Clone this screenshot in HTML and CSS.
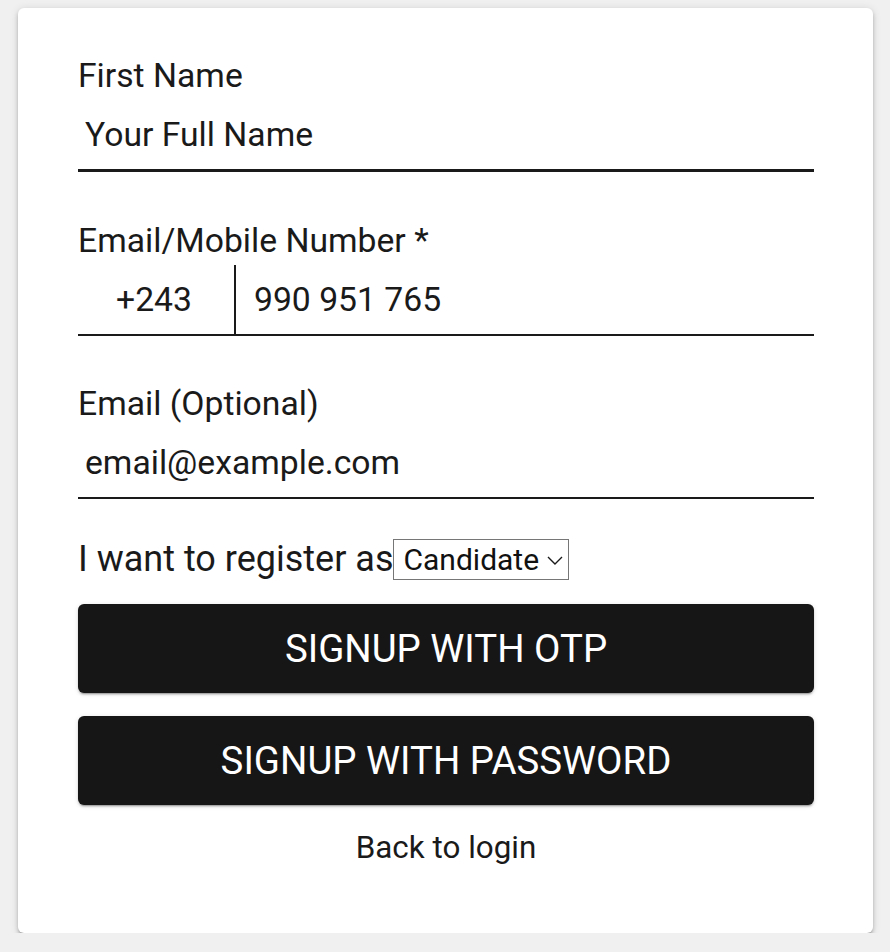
FILE: index.html
```html
<!DOCTYPE html>
<html lang="en">
<head>
<meta charset="utf-8">
<title>Sign up</title>
<link rel="stylesheet" href="styles.css">
</head>
<body>
<main class="card">
  <form class="form">
    <div class="field">
      <label class="label" for="name">First Name</label>
      <input class="input input-first" id="name" type="text" placeholder="Your Full Name">
    </div>
    <div class="field field-mid">
      <label class="label" for="phone">Email/Mobile Number *</label>
      <div class="phone-row">
        <span class="code">+243</span>
        <input class="input input-phone" id="phone" type="text" value="990 951 765">
      </div>
    </div>
    <div class="field">
      <label class="label" for="email">Email (Optional)</label>
      <input class="input" id="email" type="text" placeholder="email@example.com">
    </div>
    <div class="register-row">
      <span class="register-text">I want to register as</span>
      <span class="select-wrap">
        <select class="select">
          <option>Candidate</option>
          <option>Employer</option>
        </select>
        <svg class="chevron" viewBox="0 0 16 9" width="16" height="9" aria-hidden="true"><path d="M1 1 L8 8 L15 1" fill="none" stroke="#1a1a1a" stroke-width="1.4"/></svg>
      </span>
    </div>
    <button class="btn btn-otp" type="button">SIGNUP WITH OTP</button>
    <button class="btn btn-pass" type="button">SIGNUP WITH PASSWORD</button>
    <a class="back" href="#">Back to login</a>
  </form>
</main>
</body>
</html>
```

FILE: styles.css
```css
* { box-sizing: border-box; }

html, body {
  margin: 0;
  padding: 0;
  background: #f0f0f0;
}

body {
  padding: 8px 17px 0 18px;
  font-family: Roboto, "Liberation Sans", Arial, sans-serif;
  color: #1a1a1a;
}

.card {
  width: 855px;
  height: 925px;
  background: #ffffff;
  border-radius: 6px;
  box-shadow: 0 3px 3px -2px rgba(0,0,0,0.28), 0 3px 4px 0 rgba(0,0,0,0.18), 0 1px 8px 0 rgba(0,0,0,0.12);
  padding: 44px 59px 0 60px;
}

.form {
  display: flex;
  flex-direction: column;
}

.field {
  display: flex;
  flex-direction: column;
  margin-bottom: 44px;
}

.field-mid {
  margin-top: 1px;
}

.label {
  font-size: 33.7px;
  line-height: 48px;
  height: 48px;
  color: #1a1a1a;
}

.input {
  font-family: Roboto, "Liberation Sans", Arial, sans-serif;
  font-size: 33.7px;
  color: #1a1a1a;
  height: 71px;
  border: none;
  border-bottom: 2px solid #1a1a1a;
  padding: 0 0 0 7px;
  outline: none;
  background: transparent;
  width: 100%;
}

.input-first {
  border-bottom-width: 3px;
  height: 72px;
}

.input::placeholder {
  color: #1a1a1a;
  opacity: 1;
}

.phone-row {
  display: flex;
  align-items: stretch;
  height: 71px;
  border-bottom: 2px solid #1a1a1a;
}

.code {
  width: 158px;
  flex: none;
  border-right: 2px solid #1a1a1a;
  font-size: 33.7px;
  display: flex;
  align-items: center;
  justify-content: center;
  padding-right: 4px;
}

.input-phone {
  border-bottom: none;
  height: 69px;
  padding-left: 18px;
}

.register-row {
  display: flex;
  align-items: center;
  height: 41px;
  margin-top: -4px;
}

.register-text {
  font-size: 36px;
  line-height: 41px;
  white-space: nowrap;
}

.select-wrap {
  position: relative;
  display: inline-block;
  height: 41px;
  margin-left: -1px;
}

.select {
  appearance: none;
  -webkit-appearance: none;
  font-family: Roboto, "Liberation Sans", Arial, sans-serif;
  font-size: 30px;
  color: #111;
  height: 41px;
  width: 176px;
  border: 1px solid #767676;
  border-radius: 0;
  background: #fff;
  padding: 0 0 0 10px;
  margin: 0;
}

.chevron {
  position: absolute;
  right: 6px;
  top: 17px;
  pointer-events: none;
}

.btn {
  height: 89px;
  width: 100%;
  border: none;
  border-radius: 6px;
  background: #161616;
  color: #ffffff;
  font-family: Roboto, "Liberation Sans", Arial, sans-serif;
  font-size: 38.4px;
  letter-spacing: 0;
  box-shadow: 0 3px 1px -2px rgba(0,0,0,0.2), 0 2px 2px 0 rgba(0,0,0,0.14), 0 1px 5px 0 rgba(0,0,0,0.12);
  cursor: pointer;
  padding: 0;
}

.btn-otp { margin-top: 24px; }
.btn-pass { margin-top: 23px; }

.back {
  display: block;
  text-align: center;
  font-size: 31.4px;
  line-height: 48px;
  margin-top: 19px;
  color: #1a1a1a;
  text-decoration: none;
}
```
